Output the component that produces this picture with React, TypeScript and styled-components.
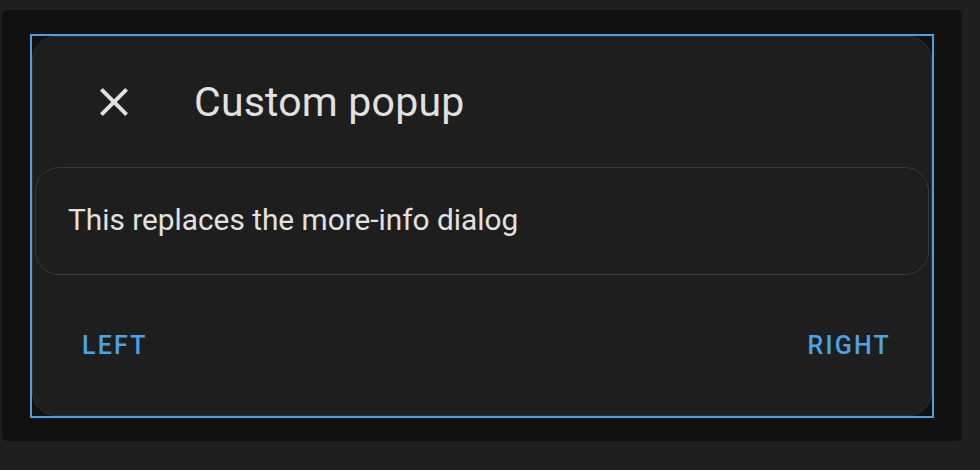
import React from "react";
import styled, { createGlobalStyle } from "styled-components";

const Global = createGlobalStyle`
  html, body { margin: 0; padding: 0; background: #1f1f1f; }
  body { font-family: Roboto, "Noto Sans", sans-serif; }
`;

const Page = styled.div`
  padding: 10px 18px 0 2px;
`;

const Panel = styled.div`
  width: 960px;
  height: 431px;
  box-sizing: border-box;
  background: #111111;
  border-radius: 5px;
  padding: 24px 28px 0 28px;
`;

const Focus = styled.div`
  width: 904px;
  height: 384px;
  box-sizing: border-box;
  border: 2px solid #47a1e4;
`;

const Dialog = styled.div`
  height: 100%;
  box-sizing: border-box;
  background: #1e1e1e;
  border: 1px solid #2f2f2f;
  border-radius: 24px;
  display: flex;
  flex-direction: column;
`;

const Header = styled.div`
  height: 130px;
  display: flex;
  align-items: center;
  padding-left: 57px;
  gap: 56px;
`;

const IconButton = styled.button`
  width: 48px;
  height: 48px;
  padding: 0;
  border: none;
  background: transparent;
  color: #e1e1e1;
  display: flex;
  align-items: center;
  justify-content: center;
`;

const Title = styled.h2`
  margin: 0;
  font-family: Roboto, sans-serif;
  font-weight: 400;
  font-size: 41px;
  letter-spacing: 0.2px;
  color: #e1e1e1;
`;

const Card = styled.div`
  margin: 0 2px;
  height: 108px;
  box-sizing: border-box;
  border: 1px solid #383838;
  border-radius: 24px;
  display: flex;
  align-items: center;
  padding-left: 32px;
  padding-bottom: 3px;
`;

const Body = styled.p`
  margin: 0;
  font-size: 29.8px;
  color: #e1e1e1;
`;

const Footer = styled.div`
  flex: 1;
  display: flex;
  align-items: center;
  justify-content: space-between;
  padding: 0 40px 0 49px;
`;

const TextButton = styled.button`
  border: none;
  background: transparent;
  padding: 0;
  font-family: Roboto, sans-serif;
  font-weight: 500;
  font-size: 25px;
  letter-spacing: 2.2px;
  color: #4aa3e6;
  text-transform: uppercase;
`;

export default function App() {
  return (
    <>
      <Global />
      <Page>
        <Panel>
          <Focus>
            <Dialog>
              <Header>
                <IconButton aria-label="Close">
                  <svg width="48" height="48" viewBox="0 0 24 24">
                    <path
                      fill="currentColor"
                      d="M19,6.41L17.59,5L12,10.59L6.41,5L5,6.41L10.59,12L5,17.59L6.41,19L12,13.41L17.59,19L19,17.59L13.41,12L19,6.41Z"
                    />
                  </svg>
                </IconButton>
                <Title>Custom popup</Title>
              </Header>
              <Card>
                <Body>This replaces the more-info dialog</Body>
              </Card>
              <Footer>
                <TextButton>Left</TextButton>
                <TextButton>Right</TextButton>
              </Footer>
            </Dialog>
          </Focus>
        </Panel>
      </Page>
    </>
  );
}
